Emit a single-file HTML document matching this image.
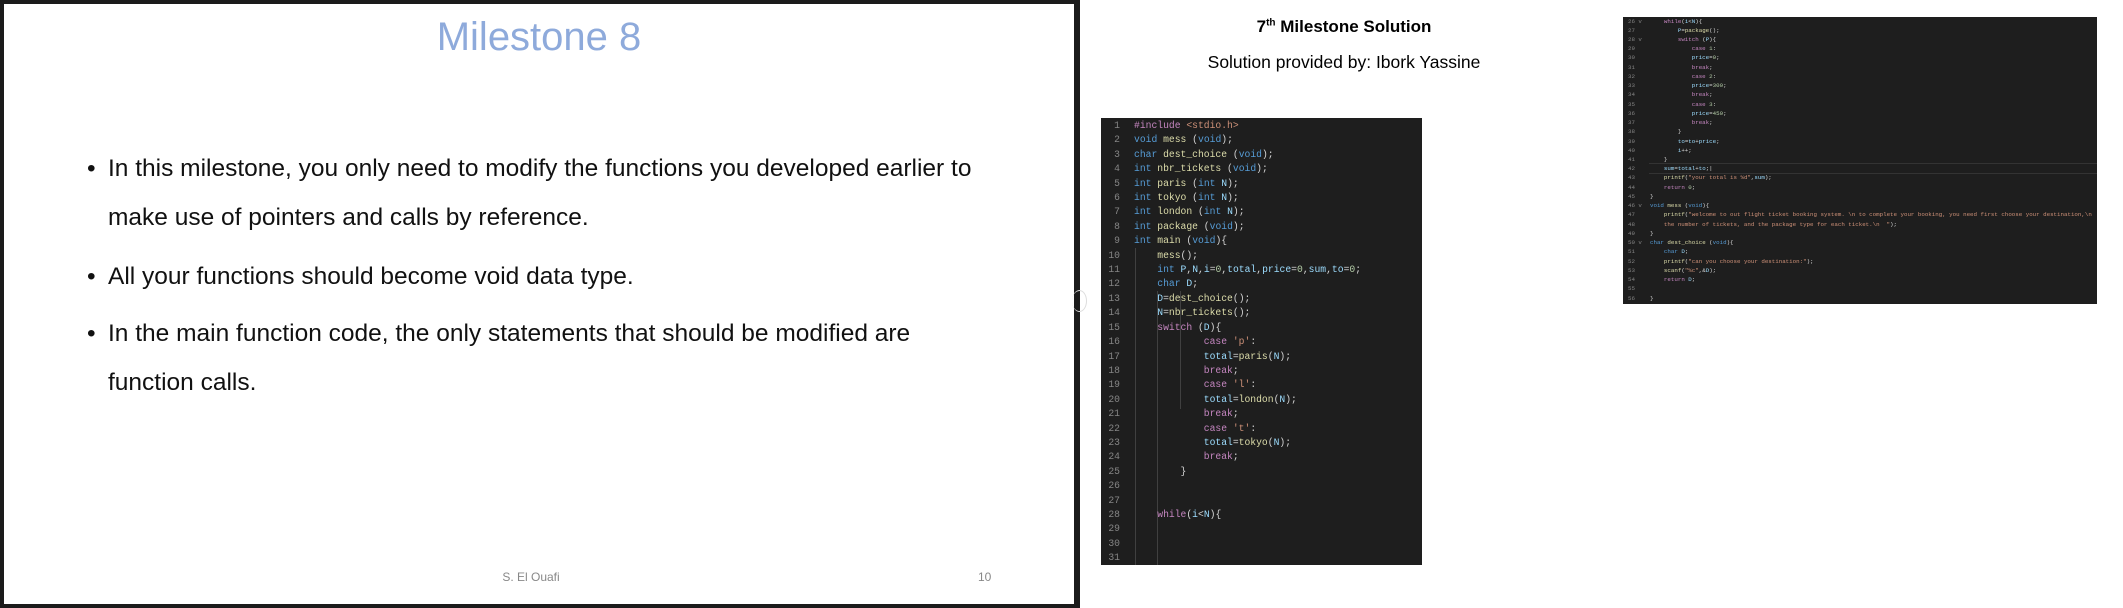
<!DOCTYPE html>
<html><head><meta charset="utf-8"><style>
body{margin:0;width:2123px;height:608px;background:#fff;position:relative;overflow:hidden;font-family:"Liberation Sans",sans-serif}
.a{position:absolute}
.slide{left:0;top:0;width:1080px;height:608px;background:#1b1b1b}
.white{left:4px;top:4px;width:1070px;height:600px;background:#fff}
.bt{color:#111;font-size:24.5px;white-space:nowrap}
pre{margin:0;font-family:"Liberation Mono",monospace}
.k{color:#569cd6}.p{color:#c586c0}.f{color:#dcdcaa}.v{color:#9cdcfe}.s{color:#ce9178}.n{color:#b5cea8}.w{color:#d4d4d4}.g{color:#858585}
</style></head><body>
<div class="a slide"></div>
<div class="a white"></div>
<div class="a" style="left:0;top:15px;width:1078px;text-align:center;color:#8eaadb;font-size:40px">Milestone 8</div>
<div class="a bt" style="left:87px;top:155px">•</div>
<div class="a bt" style="left:108px;top:155px">In this milestone, you only need to modify the functions you developed earlier to</div>
<div class="a bt" style="left:108px;top:204px">make use of pointers and calls by reference.</div>
<div class="a bt" style="left:87px;top:263px">•</div>
<div class="a bt" style="left:108px;top:263px">All your functions should become void data type.</div>
<div class="a bt" style="left:87px;top:320px">•</div>
<div class="a bt" style="left:108px;top:320px">In the main function code, the only statements that should be modified are</div>
<div class="a bt" style="left:108px;top:369px">function calls.</div>
<div class="a" style="left:481px;top:570px;width:100px;text-align:center;color:#888;font-size:12px">S. El Ouafi</div>
<div class="a" style="left:978px;top:570px;color:#888;font-size:12px">10</div>

<div class="a" style="left:1200px;top:17px;width:288px;text-align:center;font-weight:bold;font-size:17px;color:#000">7<sup style="font-size:10px">th</sup> Milestone Solution</div>
<div class="a" style="left:1150px;top:52px;width:388px;text-align:center;font-size:17.5px;color:#000">Solution provided by: Ibork Yassine</div>
<div class="a" style="left:1072px;top:290px;width:14px;height:20px;border:1px solid #ddd;border-radius:50%;border-left:none"></div>

<div class="a" style="left:1101px;top:118px;width:321px;height:447px;background:#1e1e1e"></div>
<div class="a" style="left:1135px;top:248px;width:1px;height:317px;background:#404040"></div>
<div class="a" style="left:1157px;top:291px;width:1px;height:274px;background:#404040"></div>
<div class="a" style="left:1180px;top:291px;width:1px;height:118px;background:#404040"></div>
<pre class="a g" style="left:1104px;top:119px;font-size:9.7px;line-height:14.4px;text-align:right;width:16px">1
2
3
4
5
6
7
8
9
10
11
12
13
14
15
16
17
18
19
20
21
22
23
24
25
26
27
28
29
30
31</pre>
<pre class="a w" style="left:1134px;top:119px;font-size:9.7px;line-height:14.4px"><span class="p">#include</span> <span class="s">&lt;stdio.h&gt;</span>
<span class="k">void</span> <span class="f">mess</span> (<span class="k">void</span>);
<span class="k">char</span> <span class="f">dest_choice</span> (<span class="k">void</span>);
<span class="k">int</span> <span class="f">nbr_tickets</span> (<span class="k">void</span>);
<span class="k">int</span> <span class="f">paris</span> (<span class="k">int</span> <span class="v">N</span>);
<span class="k">int</span> <span class="f">tokyo</span> (<span class="k">int</span> <span class="v">N</span>);
<span class="k">int</span> <span class="f">london</span> (<span class="k">int</span> <span class="v">N</span>);
<span class="k">int</span> <span class="f">package</span> (<span class="k">void</span>);
<span class="k">int</span> <span class="f">main</span> (<span class="k">void</span>){
    <span class="f">mess</span>();
    <span class="k">int</span> <span class="v">P</span>,<span class="v">N</span>,<span class="v">i</span>=<span class="n">0</span>,<span class="v">total</span>,<span class="v">price</span>=<span class="n">0</span>,<span class="v">sum</span>,<span class="v">to</span>=<span class="n">0</span>;
    <span class="k">char</span> <span class="v">D</span>;
    <span class="v">D</span>=<span class="f">dest_choice</span>();
    <span class="v">N</span>=<span class="f">nbr_tickets</span>();
    <span class="p">switch</span> (<span class="v">D</span>){
            <span class="p">case</span> <span class="s">'p'</span>:
            <span class="v">total</span>=<span class="f">paris</span>(<span class="v">N</span>);
            <span class="p">break</span>;
            <span class="p">case</span> <span class="s">'l'</span>:
            <span class="v">total</span>=<span class="f">london</span>(<span class="v">N</span>);
            <span class="p">break</span>;
            <span class="p">case</span> <span class="s">'t'</span>:
            <span class="v">total</span>=<span class="f">tokyo</span>(<span class="v">N</span>);
            <span class="p">break</span>;
        }


    <span class="p">while</span>(<span class="v">i</span>&lt;<span class="v">N</span>){</pre>

<div class="a" style="left:1623px;top:17px;width:474px;height:287px;background:#1e1e1e;overflow:hidden">
<div class="a" style="left:26px;top:146px;width:448px;height:9px;border-top:1px solid #333;border-bottom:1px solid #333"></div>
<pre class="a g" style="left:5px;top:-0.5px;font-size:5.8px;line-height:9.23px">26 v
27
28 v
29
30
31
32
33
34
35
36
37
38
39
40
41
42
43
44
45
46 v
47
48
49
50 v
51
52
53
54
55
56</pre>
<pre class="a w" style="left:27px;top:-0.5px;font-size:5.8px;line-height:9.23px">    <span class="p">while</span>(<span class="v">i</span>&lt;<span class="v">N</span>){
        <span class="v">P</span>=<span class="f">package</span>();
        <span class="p">switch</span> (<span class="v">P</span>){
            <span class="p">case</span> <span class="n">1</span>:
            <span class="v">price</span>=<span class="n">0</span>;
            <span class="p">break</span>;
            <span class="p">case</span> <span class="n">2</span>:
            <span class="v">price</span>=<span class="n">300</span>;
            <span class="p">break</span>;
            <span class="p">case</span> <span class="n">3</span>:
            <span class="v">price</span>=<span class="n">450</span>;
            <span class="p">break</span>;
        }
        <span class="v">to</span>=<span class="v">to</span>+<span class="v">price</span>;
        <span class="v">i</span>++;
    }
    <span class="v">sum</span>=<span class="v">total</span>+<span class="v">to</span>;|
    <span class="f">printf</span>(<span class="s">"your total is %d"</span>,<span class="v">sum</span>);
    <span class="p">return</span> <span class="n">0</span>;
}
<span class="k">void</span> <span class="f">mess</span> (<span class="k">void</span>){
    <span class="f">printf</span>(<span class="s">"welcome to out flight ticket booking system. \n to complete your booking, you need first choose your destination,\n</span>
<span class="s">    the number of tickets, and the package type for each ticket.\n  "</span>);
}
<span class="k">char</span> <span class="f">dest_choice</span> (<span class="k">void</span>){
    <span class="k">char</span> <span class="v">D</span>;
    <span class="f">printf</span>(<span class="s">"can you choose your destination:"</span>);
    <span class="f">scanf</span>(<span class="s">"%c"</span>,&amp;<span class="v">D</span>);
    <span class="p">return</span> <span class="v">D</span>;

}</pre>
</div>
</body></html>
